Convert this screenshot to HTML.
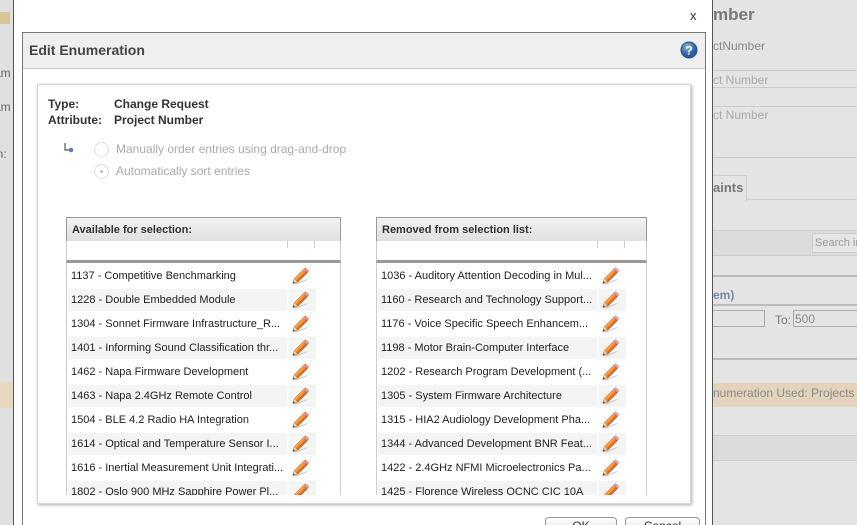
<!DOCTYPE html>
<html style="overflow:hidden;width:857px;height:525px"><head><meta charset="utf-8"><style>
*{margin:0;padding:0;box-sizing:border-box}
body{width:857px;height:525px;overflow:hidden;background:#e4e4e4;font-family:"Liberation Sans",Arial,sans-serif;position:relative;color:#333}
.a{position:absolute}
.bg{color:#999;font-size:12px;white-space:nowrap}
.dlg{left:13px;top:0;width:700px;height:525px;background:#fff;border:1px solid #555;border-top:none;border-bottom:none;z-index:5}
.pan{left:22px;top:32px;width:684px;height:493px;border:1px solid #777;border-bottom:none;background:#fff;z-index:6}
.hdr{left:0;top:0;width:682px;height:36px;background:#efefef;border-bottom:1px solid #ccc}
.card{left:14px;top:51px;width:654px;height:420px;border:1px solid #d6d6d6;box-shadow:1px 1px 3px #aaa;background:#fff}
.tbl{height:280px}
.th{left:0;top:0;width:100%;height:25px;border:1px solid #999;background:linear-gradient(#f2f2f2,#e0e0e0);font-weight:bold;font-size:11px;padding:6px 0 0 5px;color:#333}
.sub{left:0;top:24px;width:100%;height:22px;border-left:1px solid #ccc;border-right:1px solid #ccc;border-bottom:3px solid #999;background:#fff}
.tick{top:0;width:1px;height:7px;background:#ccc}
.body{left:0;top:46px;width:100%;height:232px;overflow:hidden;border-left:1px solid #ccc;border-right:1px solid #ccc}
.row{position:absolute;left:1px;height:22px;width:248px}
.tx{position:absolute;left:0;top:0;width:219px;height:22px;font-size:11px;line-height:22px;padding-left:3px;white-space:nowrap;overflow:hidden;color:#222}
.ic{position:absolute;left:221px;top:0;width:27px;height:22px}
.btn{height:14px;border:1px solid #999;border-radius:4px;background:linear-gradient(#fff,#e8e8e8);font-size:12px;text-align:center;line-height:14px;z-index:7;padding-top:1px}
</style></head><body>
<div class="a" style="left:0;top:0;width:13px;height:525px;background:#e0e0e0"></div>
<div class="a" style="left:0;top:12px;width:10px;height:12px;background:#d9c596"></div>
<div class="a bg" style="left:-6px;top:66px;color:#666">am</div>
<div class="a bg" style="left:-6px;top:100px;color:#666">am</div>
<div class="a bg" style="left:-10px;top:147px;color:#666">on:</div>
<div class="a" style="left:0;top:382px;width:13px;height:26px;background:#e8d8c0"></div>
<div class="a bg" style="left:713px;top:5px;font-size:17px;font-weight:bold;color:#777">mber</div>
<div class="a bg" style="left:713px;top:39px;color:#888">ctNumber</div>
<div class="a" style="left:713px;top:70px;width:144px;height:18px;border-top:1px solid #ccc;border-bottom:1px solid #ccc"></div>
<div class="a bg" style="left:713px;top:73px;color:#aaa">ct Number</div>
<div class="a" style="left:713px;top:106px;width:144px;height:52px;border-top:1px solid #ccc;border-bottom:1px solid #ccc"></div>
<div class="a bg" style="left:713px;top:108px;color:#aaa">ct Number</div>
<div class="a" style="left:700px;top:175px;width:47px;height:26px;border:1px solid #ccc;border-bottom:none;background:#e4e4e4"></div>
<div class="a" style="left:747px;top:199px;width:110px;height:1px;background:#ccc"></div>
<div class="a bg" style="left:713px;top:180px;font-weight:bold;font-size:13px;color:#777">aints</div>
<div class="a" style="left:713px;top:230px;width:144px;height:26px;background:#dcdcdc;border-top:1px solid #ccc;border-bottom:1px solid #ccc"></div>
<div class="a" style="left:812px;top:233px;width:50px;height:20px;border:1px solid #ccc;background:#e6e6e6;font-size:11px;color:#999;padding:3px 2px;white-space:nowrap;overflow:hidden">Search in</div>
<div class="a" style="left:713px;top:275px;width:144px;height:2px;background:#bbb"></div>
<div class="a bg" style="left:713px;top:288px;color:#7788aa;font-weight:bold">em)</div>
<div class="a" style="left:713px;top:304px;width:144px;height:2px;background:#bbb"></div>
<div class="a" style="left:700px;top:310px;width:65px;height:17px;border:1px solid #aaa"></div>
<div class="a bg" style="left:775px;top:313px;color:#777">To:</div>
<div class="a" style="left:793px;top:310px;width:70px;height:17px;border:1px solid #aaa;font-size:12px;color:#888;padding:1px 1px">500</div>
<div class="a" style="left:713px;top:358px;width:144px;height:2px;background:#bbb"></div>
<div class="a" style="left:713px;top:383px;width:144px;height:24px;background:#e3d3bc"></div>
<div class="a bg" style="left:713px;top:386px;color:#888">numeration Used: Projects</div>
<div class="a" style="left:713px;top:435px;width:144px;height:26px;border-top:1px solid #ccc;border-bottom:1px solid #ccc;background:#dcdcdc"></div>

<div class="a dlg">
  <div class="a" style="left:676px;top:8px;font-size:13px;color:#333">x</div>
</div>
<div class="a pan">
  <div class="a hdr">
    <div class="a" style="left:6px;top:9px;font-size:14px;font-weight:bold;color:#444">Edit Enumeration</div>
    <svg class="a" style="left:657px;top:8px" width="18" height="18" viewBox="0 0 18 18"><defs><radialGradient id="g" cx="40%" cy="30%"><stop offset="0" stop-color="#8fb8e6"/><stop offset="1" stop-color="#2a5f9e"/></radialGradient></defs><circle cx="9" cy="9" r="8" fill="url(#g)" stroke="#2a4f80"/><text x="9" y="13.5" font-family="Liberation Sans" font-weight="bold" font-size="12" fill="#fff" text-anchor="middle">?</text></svg>
  </div>
  <div class="a card">
    <div class="a" style="left:10px;top:11px;font-size:12px;font-weight:bold;line-height:16px;color:#333">Type:<br>Attribute:</div>
    <div class="a" style="left:76px;top:11px;font-size:12px;font-weight:bold;line-height:16px;color:#333">Change Request<br>Project Number</div>
    <svg class="a" style="left:26px;top:57px" width="14" height="12"><path d="M1 1V8H5" stroke="#333" fill="none" stroke-width="1"/><circle cx="7" cy="8" r="2.3" fill="#5b7fb0"/></svg>
    <div class="a" style="left:56px;top:57px;width:15px;height:15px;border:1px solid #ddd;border-radius:50%"></div>
    <div class="a" style="left:78px;top:57px;font-size:12px;color:#aaa">Manually order entries using drag-and-drop</div>
    <div class="a" style="left:56px;top:79px;width:15px;height:15px;border:1px solid #ddd;border-radius:50%"><div class="a" style="left:5px;top:5px;width:3px;height:3px;border-radius:50%;background:#bbb"></div></div>
    <div class="a" style="left:78px;top:79px;font-size:12px;color:#aaa">Automatically sort entries</div>
  </div>
</div>

<svg width="0" height="0" style="position:absolute"><defs><g id="p"><path d="M3 17 L4.2 12.5 L14 2.7 L17.3 6 L7.5 15.8 Z" fill="#e8731e" stroke="#9a4a10" stroke-width="0.6"/><path d="M4.2 12.5 L14 2.7 L15.6 4.3 L5.8 14.1Z" fill="#f6a14a"/><path d="M14 2.7 L15.6 1.1 L18.9 4.4 L17.3 6Z" fill="#e9a0a8" stroke="#a06070" stroke-width="0.5"/><path d="M3 17 L4.2 12.5 L7.5 15.8Z" fill="#f0d5b0"/><path d="M3 17 L3.6 14.8 L5.2 16.4Z" fill="#333"/><path d="M5 18 L17 13" stroke="#ccc" stroke-width="1.2"/></g></defs></svg>

<div id="L" class="a tbl" style="left:66px;top:217px;width:275px;z-index:8"></div>
<div id="R" class="a tbl" style="left:376px;top:217px;width:271px;z-index:8"></div>

<div class="a btn" style="left:545px;top:517px;width:72px">OK</div>
<div class="a btn" style="left:625px;top:517px;width:75px">Cancel</div>

<script>
function build(id,title,rows){
 var h='<div class="a th">'+title+'</div><div class="a sub"><div class="a tick" style="left:220px"></div><div class="a tick" style="left:247px"></div></div><div class="a body">';
 rows.forEach(function(r,i){
  var bg=i%2?'#f4f4f4':'#fff';
  h+='<div class="row" style="top:'+(2+i*24)+'px"><div class="tx" style="background:'+bg+'">'+r+'</div><div class="ic" style="background:'+bg+'"><svg style="position:absolute;left:1px;top:1px" width="20" height="20" viewBox="0 0 20 19"><use href="#p"/></svg></div></div>';
 });
 h+='</div>';
 document.getElementById(id).innerHTML=h;
}
build('L','Available for selection:',["1137 - Competitive Benchmarking","1228 - Double Embedded Module","1304 - Sonnet Firmware Infrastructure_R...","1401 - Informing Sound Classification thr...","1462 - Napa Firmware Development","1463 - Napa 2.4GHz Remote Control","1504 - BLE 4.2 Radio HA Integration","1614 - Optical and Temperature Sensor I...","1616 - Inertial Measurement Unit Integrati...","1802 - Oslo 900 MHz Sapphire Power Pl..."]);
build('R','Removed from selection list:',["1036 - Auditory Attention Decoding in Mul...","1160 - Research and Technology Support...","1176 - Voice Specific Speech Enhancem...","1198 - Motor Brain-Computer Interface","1202 - Research Program Development (...","1305 - System Firmware Architecture","1315 - HIA2 Audiology Development Pha...","1344 - Advanced Development BNR Feat...","1422 - 2.4GHz NFMI Microelectronics Pa...","1425 - Florence Wireless OCNC CIC 10A"]);
</script>
</body></html>
